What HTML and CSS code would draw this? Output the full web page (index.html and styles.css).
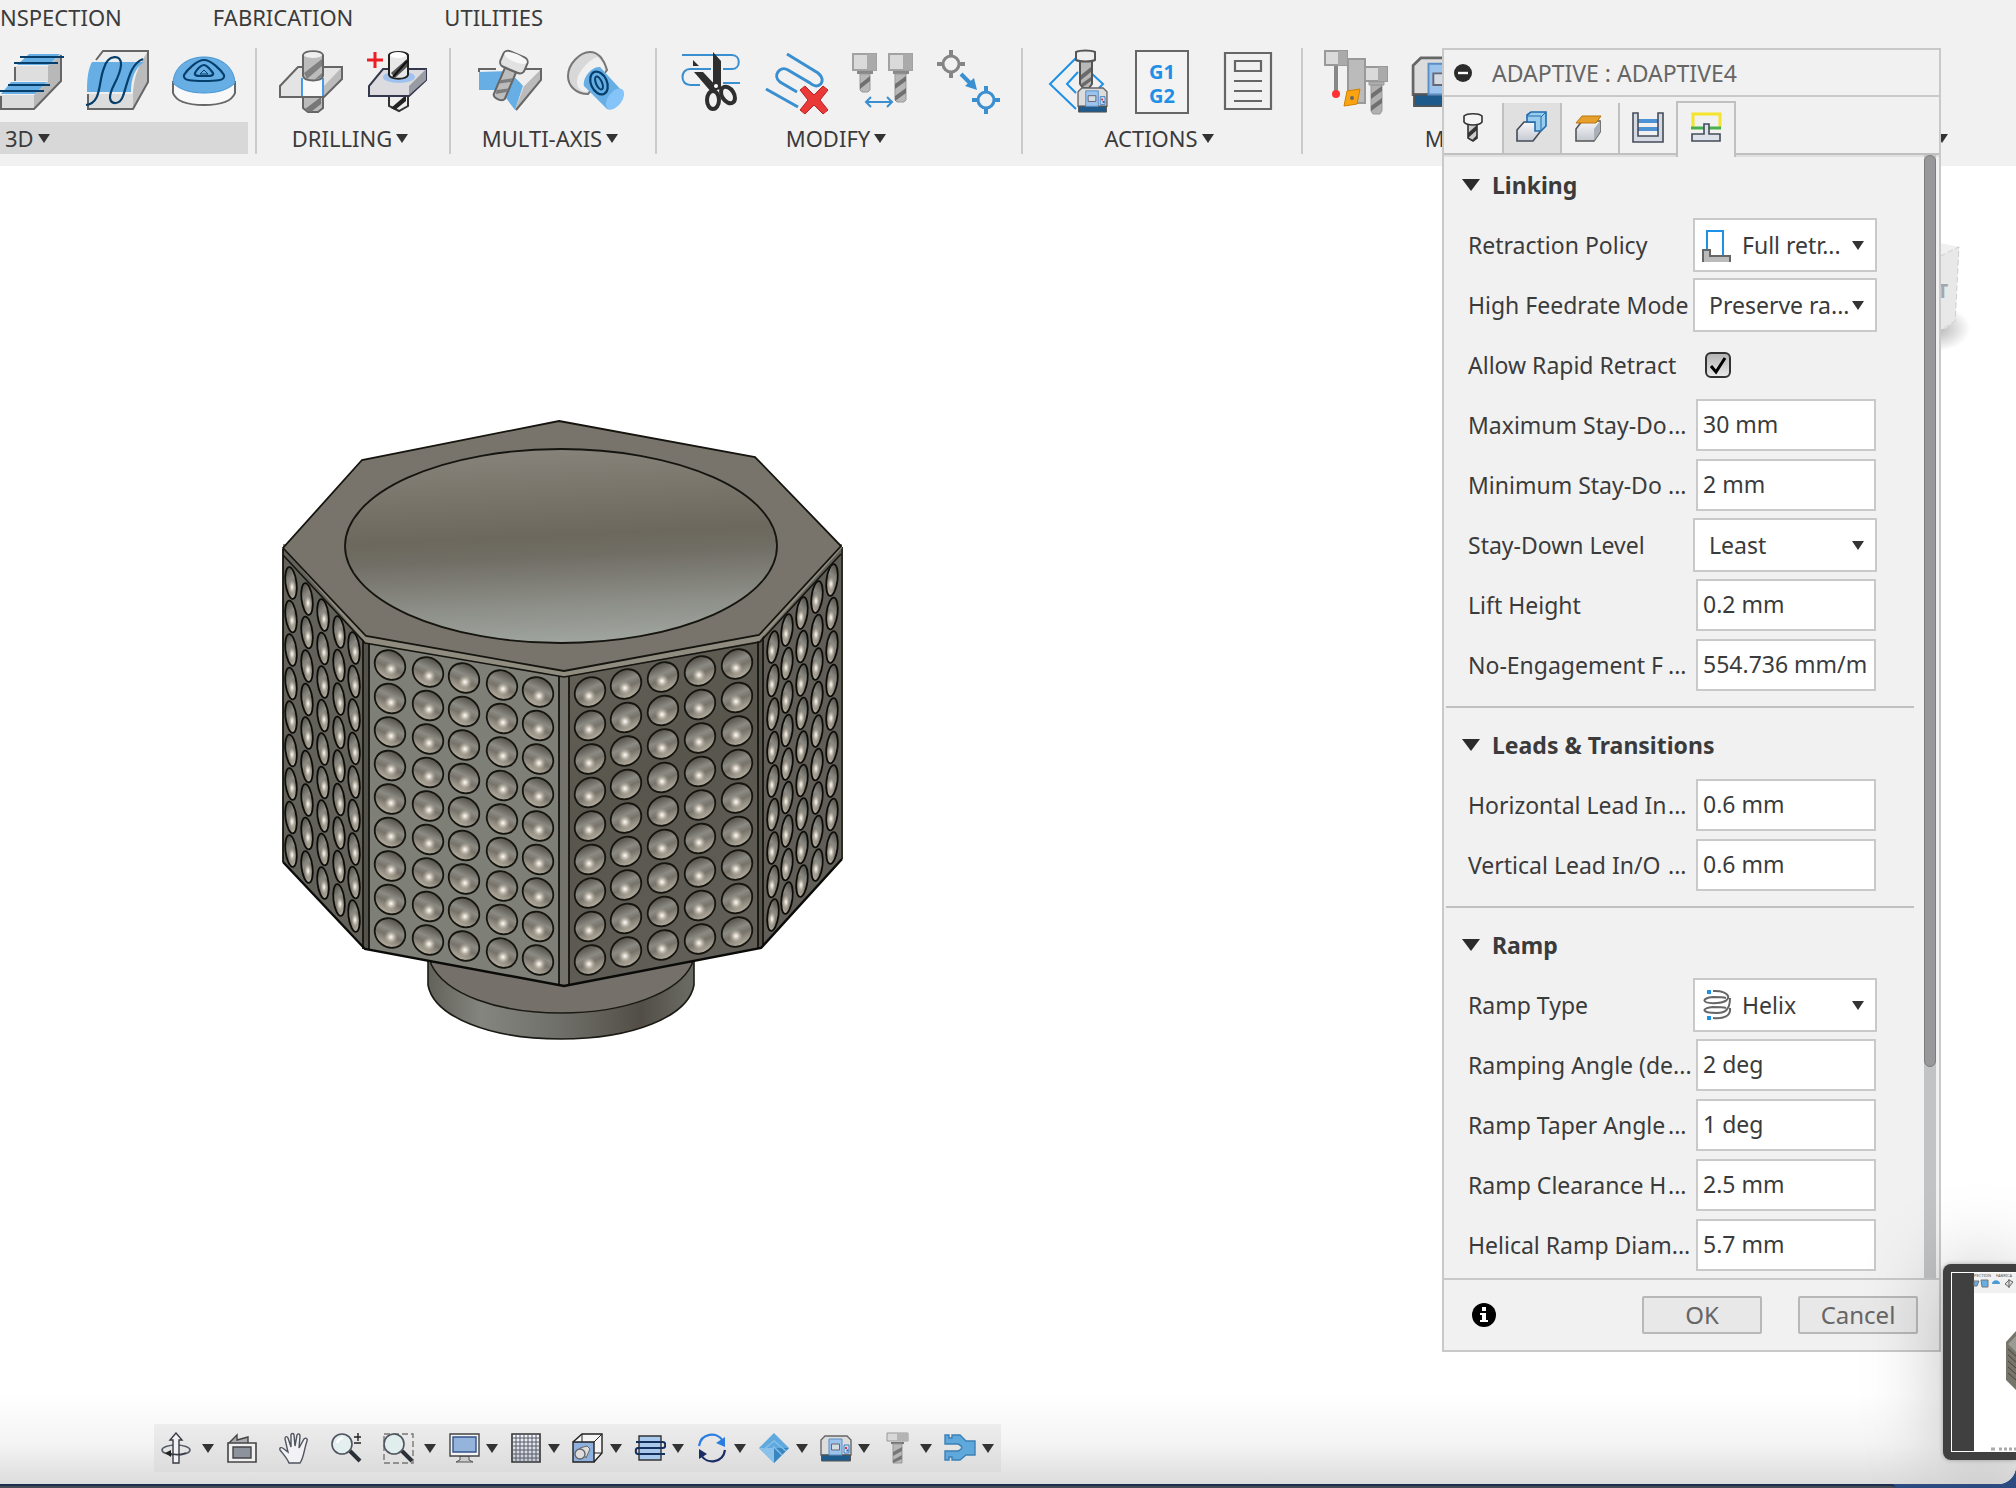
FILE: index.html
```html
<!DOCTYPE html>
<html lang="en">
<head>
    <meta charset="UTF-8">
    <meta name="viewport" content="width=device-width, initial-scale=1.0">
    <title>Adaptive : Adaptive4</title>
    <link rel="stylesheet" href="styles.css">
</head>
<body>

    <!-- shared shapes -->
    <svg class="defs" aria-hidden="true">
        <defs>
            <linearGradient id="plate" x1="0" x2="0" y1="0" y2="1">
                <stop offset="0" stop-color="#f8f8fa"/>
                <stop offset="1" stop-color="#c4c8d0"/>
            </linearGradient>
            <symbol id="machine" viewBox="0 0 32 28">
                <path d="M5 1h22l4 4v15H1V5z" fill="#dcdcdc" stroke="#666" stroke-width="1.4"/>
                <path d="M1.500 20h29v6h-29z" fill="#1f5a8c" stroke="#555"/>
                <path d="M9 4h13v16H9z" fill="#9cc3ec" stroke="#5a8ec4"/>
                <path d="M11.500 9h8v6h-8z" fill="#d5dbe2" stroke="#667"/>
                <path d="M24 10h5v8h-5z" fill="#cfe0f5" stroke="#3f7fc0"/>
                <path d="M25 12h2v2h-2z" fill="#e03040"/>
                <path d="M26.500 14.500h2v2h-2z" fill="#2a62c8"/>
            </symbol>
            <symbol id="caret" viewBox="0 0 12 9">
                <path d="M0 0h12L6 9z" fill="#333"/>
            </symbol>
        </defs>
    </svg>

    <div class="window">
        <header class="ribbon">
            <nav class="menu">
                <a href="#">NSPECTION</a>
                <a href="#">FABRICATION</a>
                <a href="#">UTILITIES</a>
            </nav>
            <div class="groups">
                <div class="group group-first">
                    <div class="icons">
                        <button aria-label="Pocket clearing"><svg viewBox="0 0 64 64">
                            <path d="M15 18h33v15H15z" fill="#dedede"/>
                            <path d="M48 18 61 6v27L34 61V47l14-14z" fill="#b8b8b8"/>
                            <path d="M0 47h34v14H0z" fill="#dcdcdc"/>
                            <path d="M15 19v14M61 7v26L34 61H1V48" fill="none" stroke="#666" stroke-width="2"/>
                            <path d="M29 6h31L49 17H17zM11 34h36L35 46H1z" fill="#66aee4"/>
                            <path d="M20 9h44M14 15h44M8 37h42M0 43h44" stroke="#063f6b" stroke-width="2.200"/>
                        </svg></button>
                        <button aria-label="Parallel"><svg viewBox="0 0 64 64">
                            <path d="M10 12 17 3h45v31L47 61H2V46l6-32z" fill="#eee"/>
                            <path d="M62 3v31L47 61V44c1-14 4-24 15-41z" fill="#bbb"/>
                            <path d="M2 46h45v15H2z" fill="#dcdcdc"/>
                            <path d="M10 12 17 3h45v31L47 61H2V46" fill="none" stroke="#666" stroke-width="2"/>
                            <path d="M6 14h52c-9 6-13 16-13 30H1C1 31 2 21 6 14z" fill="#66aee4"/>
                            <path d="M0 57c16-2 12-23 18-37 4-14 18-14 17-3-1 14-12 24-11 33 1 7 10 7 13-2 5-14 7-32 20-37" fill="none" stroke="#063f6b" stroke-width="2.200"/>
                        </svg></button>
                        <button aria-label="Morphed spiral"><svg viewBox="0 0 64 64">
                            <path d="M1 34v11c3 8 15 12 31 12s28-4 31-12V34z" fill="#f8f8f8" stroke="#666" stroke-width="2"/>
                            <path d="M1 35C2 18 16 9 32 9s30 9 31 26c-7 7-18 10-31 10S8 42 1 35z" fill="#66aee4" stroke="#4a96d2"/>
                            <path d="M32 12c7 0 17 10 20 15 2 6-10 6-20 6S10 33 12 27c3-5 13-15 20-15zM32 17c3 0 6 4 9 8 1 3-3 3-9 3s-10 0-9-3c2-4 6-8 9-8z" fill="none" stroke="#063f6b" stroke-width="2.200"/>
                            <path d="m32 22 4 4h-8z" fill="none" stroke="#063f6b"/>
                        </svg></button>
                    </div>
                    <button class="group-label active">3D<svg class="caret"><use href="#caret"/></svg></button>
                </div>
                <div class="group">
                    <div class="icons">
                        <button aria-label="Drill"><svg viewBox="0 0 64 64">
                            <path d="M25 48h20v12l-5 4H30l-5-4z" fill="#bbb" stroke="#666" stroke-width="2"/>
                            <path d="m27 61 16-12v7l-10 8z" fill="#777"/>
                            <path d="M20 19h44v12L46 49H2V38z" fill="#e4e4e4"/>
                            <path d="M46 38 64 19v12L46 49z" fill="#bbb"/>
                            <path d="M20 19h44v12L46 49H2V38z" fill="none" stroke="#666" stroke-width="2"/>
                            <path d="M24 30h21v18H24z" fill="#f8f8f8"/>
                            <path d="M24 30v18M45 30v18" stroke="#1e88e5" stroke-width="1.600"/>
                            <path d="M25 7v21c2 6 18 6 20 0V7c-2-5-18-5-20 0z" fill="#bcbcbc" stroke="#666" stroke-width="2"/>
                            <path d="M26 25 44 11v7L29 31zM36 32l8-7v4z" fill="#808080"/>
                            <ellipse cx="35" cy="7" rx="9" ry="3" fill="#eee"/>
                        </svg></button>
                        <button aria-label="Hole recognition"><svg viewBox="0 0 64 64">
                            <path d="M25 46h19v12l-9 5-10-5z" fill="#eee" stroke="#333" stroke-width="2"/>
                            <path d="m27 60 15-13v6L31 62z" fill="#222"/>
                            <path d="M19 21h43v11L45 48H5V38z" fill="#dcdce0" stroke="#33384c" stroke-width="2"/>
                            <path d="M45 38 62 21v11L45 47z" fill="#9a9ca4"/>
                            <ellipse cx="35" cy="29" rx="16" ry="6" fill="#9fc2ee"/>
                            <path d="M25 7v20c2 5 17 5 19 0V7c-2-4-17-4-19 0z" fill="#e8e8e8" stroke="#222" stroke-width="2"/>
                            <path d="m27 25 16-14v8L31 30z" fill="#555"/>
                            <path d="M29 29 43 13" stroke="#111" stroke-width="2"/>
                            <ellipse cx="34" cy="7" rx="8" ry="3" fill="#fff"/>
                            <path d="M11 4v16M3 12h16" stroke="#ee1c25" stroke-width="3"/>
                        </svg></button>
                    </div>
                    <button class="group-label">DRILLING<svg class="caret"><use href="#caret"/></svg></button>
                </div>
                <div class="group group-wide">
                    <div class="icons">
                        <button aria-label="Swarf"><svg viewBox="0 0 64 64">
                            <path d="M1 24 33 23l12 15-8 24-15-20H1z" fill="#66aee4"/>
                            <path d="M46 38 63 21v11L37 62z" fill="#bbb"/>
                            <path d="M46 38 63 21H46L33 26z" fill="#eee"/>
                            <path d="M1 24v-3h17M46 21h17v11L38 62" fill="none" stroke="#666" stroke-width="2"/>
                            <g transform="rotate(23 34 16)">
                                <path d="M29 22h12v29c-1 4-11 4-12 0z" fill="#bcbcbc" stroke="#666" stroke-width="2"/>
                                <path d="m30 35 10-6v4l-10 6zM30 46l10-6v4l-9 6z" fill="#7c7c7c"/>
                                <rect x="22" y="5" width="26" height="17" rx="5" fill="#e2e2e2" stroke="#666" stroke-width="2"/>
                                <ellipse cx="35" cy="9" rx="12" ry="4" fill="#f7f7f7"/>
                            </g>
                        </svg></button>
                        <button aria-label="Multi-axis contour"><svg viewBox="0 0 64 64">
                            <path d="M26 4c9 0 14 8 17 18L24 46C12 46 4 38 4 28 4 16 16 4 26 4z" fill="#d8d8d8" stroke="#777" stroke-width="2"/>
                            <path d="M33 9c5 4 8 8 8 14L23 44c-6 0-10-4-10-10 0-10 12-22 20-25z" fill="#f0f0f0"/>
                            <path d="m36 19 23 25c3 6-8 20-16 17L20 38c-2-8 8-20 16-19z" fill="#66aee4"/>
                            <ellipse cx="51" cy="51" rx="7" ry="12" transform="rotate(36 51 51)" fill="#84c4f8"/>
                            <ellipse cx="35" cy="35" rx="8" ry="12" transform="rotate(-24 35 35)" fill="none" stroke="#063f6b" stroke-width="2.200"/>
                            <ellipse cx="35" cy="35" rx="3" ry="7" transform="rotate(-24 35 35)" fill="none" stroke="#063f6b" stroke-width="2"/>
                        </svg></button>
                    </div>
                    <button class="group-label">MULTI-AXIS<svg class="caret"><use href="#caret"/></svg></button>
                </div>
                <div class="group">
                    <div class="icons">
                        <button aria-label="Trim toolpath"><svg viewBox="0 0 64 64">
                            <path d="M4 7h50c9 0 9 14 0 14H45M33 21H12c-10 0-10 16 0 16h10M45 35h17" fill="none" stroke="#3a8fd0" stroke-width="2"/>
                            <path d="m35 4 8 9v29l-8-2z" fill="#2e2e2e"/>
                            <path d="M16 24h9l16 17-7 4zM15 12l6 6h-6z" fill="#2e2e2e"/>
                            <ellipse cx="35" cy="52" rx="6" ry="9" fill="none" stroke="#2e2e2e" stroke-width="4"/>
                            <ellipse cx="50" cy="47" rx="6" ry="9" transform="rotate(-32 50 47)" fill="none" stroke="#2e2e2e" stroke-width="4"/>
                            <circle cx="38" cy="38" r="2" fill="#fff"/>
                        </svg></button>
                        <button aria-label="Delete passes"><svg viewBox="0 0 64 64">
                            <path d="m23 6 31 19c10 8 0 18-8 10L24 22c-8-5-16 6-8 12l17 10M2 41l32 18" fill="none" stroke="#3a8fd0" stroke-width="3"/>
                            <path d="m36 42 5-4 9 9 9-9 5 4-8 10 8 10-5 4-9-9-9 9-5-4 8-10z" fill="#e93a38" stroke="#b82222"/>
                        </svg></button>
                        <button aria-label="Replace tool"><svg viewBox="0 0 64 64">
                            <path d="M3 6h23v16H3z" fill="#dadada" stroke="#a2a2a2" stroke-width="2"/>
                            <path d="M17 6h9v16h-9z" fill="#aaa"/>
                            <path d="M7 23h16v3H7z" fill="#888"/>
                            <path d="M10 26h10v16l-2 2h-6l-2-2z" fill="#b8b8b8" stroke="#999"/>
                            <path d="m10 36 10-8v5l-10 8z" fill="#707070"/>
                            <path d="M39 6h23v16H39z" fill="#dadada" stroke="#a2a2a2" stroke-width="2"/>
                            <path d="M53 6h9v16h-9z" fill="#aaa"/>
                            <path d="M43 23h16v3H43z" fill="#888"/>
                            <path d="M45 26h11v26l-2 2h-7l-2-2z" fill="#b8b8b8" stroke="#999"/>
                            <path d="m45 36 11-8v5l-11 8zM45 48l11-8v5l-11 8z" fill="#707070"/>
                            <path d="M16 54h26m-21-5-5 5 5 5m16-10 5 5-5 5" fill="none" stroke="#3a8fd0" stroke-width="2"/>
                        </svg></button>
                        <button aria-label="Move entry positions"><svg viewBox="0 0 64 64">
                            <circle cx="15" cy="16" r="8" fill="none" stroke="#858585" stroke-width="3"/>
                            <path d="M15 2v7M15 23v7M1 16h7M22 16h7" stroke="#858585" stroke-width="4"/>
                            <path d="m25 26 9 9" stroke="#3a8fd0" stroke-width="4"/>
                            <path d="m41 42-12-4 9-8z" fill="#3a8fd0"/>
                            <circle cx="50" cy="52" r="8" fill="none" stroke="#3a8fd0" stroke-width="3"/>
                            <path d="M50 38v7M50 59v7M36 52h7M57 52h7" stroke="#3a8fd0" stroke-width="4"/>
                        </svg></button>
                    </div>
                    <button class="group-label">MODIFY<svg class="caret"><use href="#caret"/></svg></button>
                </div>
                <div class="group">
                    <div class="icons">
                        <button aria-label="Simulate"><svg viewBox="0 0 64 64">
                            <path d="M32 10 6 36l26 25M34 24 23 36l9 9M46 24l13 12-4 4" fill="none" stroke="#1e90e6" stroke-width="2"/>
                            <path d="M36 12h12v24l-3 4h-6l-3-4z" fill="#b8b8b8" stroke="#555" stroke-width="2"/>
                            <path d="m37 27 10-8v5l-10 8zM37 36l10-7v4l-8 6z" fill="#6a6a6a"/>
                            <path d="M32 4c4-2 15-2 19 0v8c-4 2-15 2-19 0z" fill="#eee" stroke="#555" stroke-width="2"/>
                            <use href="#machine" x="33" y="39" width="31" height="27"/>
                        </svg></button>
                        <button aria-label="Post process"><svg viewBox="0 0 64 64">
                            <path d="M6 3h52v62H6z" fill="#f3f3f3" stroke="#666" stroke-width="2"/>
                            <text x="32" y="31" text-anchor="middle" class="g-code">G1</text>
                            <text x="32" y="55" text-anchor="middle" class="g-code">G2</text>
                        </svg></button>
                        <button aria-label="Setup sheet"><svg viewBox="0 0 64 64">
                            <path d="M9 5h46v56H9zM19 13h26v10H19zM18 33h28M18 43h28M18 53h28" fill="none" stroke="#666" stroke-width="2.200"/>
                        </svg></button>
                    </div>
                    <button class="group-label">ACTIONS<svg class="caret"><use href="#caret"/></svg></button>
                </div>
                <div class="group group-manage">
                    <div class="icons">
                        <button aria-label="Tool library"><svg viewBox="0 0 64 64">
                            <path d="M24 11h17v44H24z" fill="#bbb" stroke="#999" stroke-width="2"/>
                            <path d="M1 3h22v14H1z" fill="#dadada" stroke="#999" stroke-width="2"/>
                            <path d="M14 3h9v14h-9z" fill="#aaa"/>
                            <path d="M12 18v26" stroke="#888" stroke-width="4"/>
                            <circle cx="12" cy="46" r="4" fill="#f33"/>
                            <path d="m23 43 13-2-3 15-13 2z" fill="#fca311" stroke="#d08000"/>
                            <circle cx="28" cy="50" r="2" fill="#666"/>
                            <path d="M41 19h22v14H41z" fill="#dadada" stroke="#999" stroke-width="2"/>
                            <path d="M54 19h9v14h-9z" fill="#aaa"/>
                            <path d="M45 34h15v3H45zM47 37h11v26l-2 3h-7l-2-3z" fill="#b0b0b0" stroke="#999"/>
                            <path d="m47 46 11-8v5l-11 8zM47 58l11-8v5l-11 8z" fill="#707070"/>
                        </svg></button>
                        <button aria-label="Machine library"><svg viewBox="0 0 64 64">
                            <use href="#machine" x="0" y="8" width="64" height="54"/>
                        </svg></button>
                    </div>
                    <button class="group-label">MANAGE<svg class="caret"><use href="#caret"/></svg></button>
                </div>
                <div class="group group-last">
                    <button class="group-label" aria-label="Select"><svg class="caret"><use href="#caret"/></svg></button>
                </div>
            </div>
        </header>

        <main class="canvas">
            <div class="stage">
                <svg class="model" viewBox="280 418 564 624" role="img" aria-label="Octagonal knob">
                    <defs>
                        <linearGradient id="bowl" x1=".4" x2=".5" y1="0" y2="1">
                            <stop offset="0" stop-color="#88837a"/>
                            <stop offset=".45" stop-color="#6c685d"/>
                            <stop offset=".56" stop-color="#716e65"/>
                            <stop offset=".8" stop-color="#8c8e87"/>
                            <stop offset="1" stop-color="#a0a59f"/>
                        </linearGradient>
                        <linearGradient id="stem">
                            <stop offset="0" stop-color="#62625b"/>
                            <stop offset=".2" stop-color="#84857e"/>
                            <stop offset=".5" stop-color="#6f6f69"/>
                            <stop offset=".8" stop-color="#524e46"/>
                            <stop offset="1" stop-color="#6c6c66"/>
                        </linearGradient>
                        <linearGradient id="faceRight" x1="0" y1="0" x2=".4" y2="1">
                            <stop offset="0" stop-color="#66635b"/>
                            <stop offset=".5" stop-color="#58554d"/>
                            <stop offset="1" stop-color="#605e56"/>
                        </linearGradient>
                        <linearGradient id="pit" x1=".3" y1="0" x2=".6" y2="1">
                            <stop offset="0" stop-color="#4c4a43"/>
                            <stop offset=".4" stop-color="#8b8a83"/>
                            <stop offset=".6" stop-color="#77736a"/>
                            <stop offset="1" stop-color="#b8b1a3"/>
                        </linearGradient>
                        <radialGradient id="glint">
                            <stop offset="0" stop-color="#fff"/>
                            <stop offset=".35" stop-color="#ded6ca" stop-opacity=".85"/>
                            <stop offset="1" stop-color="#b0a99b" stop-opacity="0"/>
                        </radialGradient>
                        <g id="dimple">
                            <ellipse rx="16" ry="14" transform="rotate(38)" fill="url(#pit)" stroke="#15140f" stroke-width="1.800"/>
                            <circle cx="1" cy="4" r="7" fill="url(#glint)"/>
                        </g>
                        <g id="slit">
                            <ellipse rx="5.500" ry="16" transform="rotate(-7)" fill="url(#pit)" stroke="#0d0c09" stroke-width="1.800"/>
                            <ellipse cx="1" cy="4" rx="4" ry="8" fill="url(#glint)"/>
                        </g>
                        <g id="dimples">
                            <use href="#dimple"/>
                            <use href="#dimple" y="33.500"/>
                            <use href="#dimple" y="67"/>
                            <use href="#dimple" y="100.500"/>
                            <use href="#dimple" y="134"/>
                            <use href="#dimple" y="167.500"/>
                            <use href="#dimple" y="201"/>
                            <use href="#dimple" y="234.500"/>
                            <use href="#dimple" y="268"/>
                        </g>
                        <g id="slits">
                            <use href="#slit"/>
                            <use href="#slit" y="33.500"/>
                            <use href="#slit" y="67"/>
                            <use href="#slit" y="100.500"/>
                            <use href="#slit" y="134"/>
                            <use href="#slit" y="167.500"/>
                            <use href="#slit" y="201"/>
                            <use href="#slit" y="234.500"/>
                            <use href="#slit" y="268"/>
                        </g>
                    </defs>

                    <!-- stem -->
                    <path d="M428 950v35c6 32 62 54 133 54s127-22 133-54v-35z" fill="url(#stem)" stroke="#1a1914" stroke-width="1.600"/>
                    <path d="M431 950v14c14 30 66 49 130 49s118-20 131-49v-14z" fill="#75706a" stroke="#1a1914" stroke-width="1.600"/>

                    <!-- side faces -->
                    <path d="M283 549 366 637V949L283 862z" fill="#62615a"/>
                    <path d="M366 637 564 672V986L366 949z" fill="#7e7f77"/>
                    <path d="M564 672 760 636V948L564 986z" fill="url(#faceRight)"/>
                    <path d="M760 636 841 547V860L760 948z" fill="#605e57"/>

                    <!-- left, front left -->
                    <use href="#slits" x="291" y="583"/>
                    <use href="#slits" x="307" y="599"/>
                    <use href="#slits" x="323" y="615"/>
                    <use href="#slits" x="339" y="632"/>
                    <use href="#slits" x="354" y="648"/>
                    <use href="#dimples" x="390" y="665"/>
                    <use href="#dimples" x="428" y="672"/>
                    <use href="#dimples" x="464" y="678"/>
                    <use href="#dimples" x="502" y="685"/>
                    <use href="#dimples" x="538" y="692"/>

                    <!-- front right, right: mirrored -->
                    <g transform="scale(-1 1)">
                        <use href="#dimples" x="-590" y="692"/>
                        <use href="#dimples" x="-626" y="684"/>
                        <use href="#dimples" x="-663" y="677"/>
                        <use href="#dimples" x="-700" y="671"/>
                        <use href="#dimples" x="-737" y="664"/>
                        <use href="#slits" x="-773" y="647"/>
                        <use href="#slits" x="-787" y="630"/>
                        <use href="#slits" x="-802" y="613"/>
                        <use href="#slits" x="-817" y="597"/>
                        <use href="#slits" x="-832" y="580"/>
                    </g>

                    <!-- vertical edges -->
                    <path d="M363 634h6v315h-6zM758 634h6v312l-6 3z" fill="#53524b"/>
                    <path d="M559 672h10v313l-5 1-5-1z" fill="#73736c"/>
                    <path d="M363 634v315M369 638v311M559 672v313M569 672v313M758 636v312M763 634v312M283 549v313M842 547v312" fill="none" stroke="#15140f" stroke-width="1.800"/>

                    <!-- top -->
                    <path d="m283 548 83 95 198 34 195-36 83-93v-4H283z" fill="#918c80"/>
                    <path d="m283 555 82 88 199 34 196-35 81-88" fill="none" stroke="#15140f" stroke-width="1.600"/>
                    <path d="m559 421 196 36 86 89-82 89-195 36-198-35-83-88 79-88z" fill="#78746b" stroke="#15140f" stroke-width="1.800"/>
                    <ellipse cx="561" cy="546" rx="216" ry="97" fill="url(#bowl)" stroke="#15140f" stroke-width="1.800"/>
                    <path d="m283 862 82 87 199 37 197-38 81-89" fill="none" stroke="#0a0a08" stroke-width="2.400"/>
                </svg>
            </div>

            <svg class="view-cube" viewBox="0 0 80 120" aria-hidden="true">
                <defs>
                    <radialGradient id="cubeShadow">
                        <stop offset="0" stop-color="#000" stop-opacity=".3"/>
                        <stop offset="1" stop-color="#000" stop-opacity="0"/>
                    </radialGradient>
                </defs>
                <ellipse cx="-4" cy="90" rx="36" ry="24" fill="url(#cubeShadow)"/>
                <path d="M0 0 20 4l-1 16-4 62-9 8H0z" fill="#f0f0f0"/>
                <path d="m0 14 20-10-4 78-16 10z" fill="#e8e8e8" stroke="#ccc" stroke-dasharray="6 3"/>
                <text x="-3" y="58" class="cube-text">T</text>
            </svg>

            <div class="navbar">
                <button class="nav-drop wide" aria-label="Orbit">
                    <svg viewBox="0 0 32 32">
                        <ellipse cx="16" cy="18" rx="14" ry="5" fill="none" stroke="#555b66" stroke-width="1.600"/>
                        <path d="M13 31V8h-3l6-7 6 7h-3v23z" fill="#f2f2f4" stroke="#3a3d46" stroke-width="1.400"/>
                        <path d="M8 21c6 2 13 2 18 0" fill="none" stroke="#3a3d46" stroke-width="1.600"/>
                        <path d="m5 21 6-3v7z" fill="#222"/>
                    </svg>
                    <svg class="caret"><use href="#caret"/></svg>
                </button>
                <button class="nav-plain" aria-label="Look at">
                    <svg viewBox="0 0 32 32">
                        <path d="m3 11 8-8v5l11-3v6" fill="#a8abb0" stroke="#444" stroke-width="1.400"/>
                        <path d="M2 11h28v19H2z" fill="#f0f0f0" stroke="#444" stroke-width="1.600"/>
                        <path d="M7 15h18v11H7z" fill="#8d929c" stroke="#444" stroke-width="1.400"/>
                    </svg>
                </button>
                <button class="nav-plain" aria-label="Pan">
                    <svg viewBox="0 0 32 32">
                        <path d="M11 31c-2-5-6-9-9-13-1-3 2-3 4-1l4 3L7 7c0-3 2-3 3-1l3 9V3c0-2 3-2 3 0l1 11 2-11c1-2 3-1 3 1l-1 12 5-9c2-2 4 0 3 2-3 8-3 17-7 22z" fill="#f2f2f4" stroke="#50545e" stroke-width="1.400"/>
                    </svg>
                </button>
                <button class="nav-plain" aria-label="Zoom">
                    <svg viewBox="0 0 32 32">
                        <circle cx="12" cy="12" r="10" fill="#e4f0f0" stroke="#50545e" stroke-width="1.600"/>
                        <path d="M7 11c1-3 3-5 6-5" fill="none" stroke="#fff" stroke-width="2.400"/>
                        <path d="m20 19 10 10" stroke="#2b2f36" stroke-width="4"/>
                        <path d="M28 1v8M24 5h7M24 11h7" stroke="#222" stroke-width="1.400"/>
                    </svg>
                </button>
                <button class="nav-drop wide" aria-label="Zoom window">
                    <svg viewBox="0 0 32 32">
                        <path d="M2 2h29v29H2z" fill="none" stroke="#777" stroke-width="1.400" stroke-dasharray="6 3"/>
                        <circle cx="12" cy="12" r="10" fill="#e0eeee" stroke="#50545e" stroke-width="1.600"/>
                        <path d="m20 19 10 10" stroke="#2b2f36" stroke-width="4"/>
                    </svg>
                    <svg class="caret"><use href="#caret"/></svg>
                </button>
                <button class="nav-drop" aria-label="Display settings">
                    <svg viewBox="0 0 32 32">
                        <path d="M12 24h9v4l4 2H8l4-2z" fill="#ccc" stroke="#555"/>
                        <path d="M2 2h29v22H2z" fill="#f4f4f4" stroke="#444" stroke-width="1.400"/>
                        <path d="M5 5h23v15H5z" fill="#94b4dc" stroke="#35538a" stroke-width="1.400"/>
                    </svg>
                    <svg class="caret"><use href="#caret"/></svg>
                </button>
                <button class="nav-drop" aria-label="Grid and snaps">
                    <svg viewBox="0 0 32 32">
                        <path d="M2 2h28v28H2z" fill="url(#plate)" stroke="#333" stroke-width="1.600"/>
                        <path d="M6 2v28M10 2v28M14 2v28M18 2v28M22 2v28M26 2v28M2 6h28M2 10h28M2 14h28M2 18h28M2 22h28M2 26h28" stroke="#555b6a"/>
                    </svg>
                    <svg class="caret"><use href="#caret"/></svg>
                </button>
                <button class="nav-drop" aria-label="Object visibility">
                    <svg viewBox="0 0 32 32">
                        <path d="M1 10 10 2h20v19l-8 9" fill="#f4f4f4" stroke="#222" stroke-width="1.400"/>
                        <path d="M10 2v8M22 10l8-8M22 21h8" fill="none" stroke="#222"/>
                        <path d="M1 10h21v20H1z" fill="#8eb2e0" stroke="#222" stroke-width="1.400"/>
                        <path d="m8 16 7-2 3 3-4 9z" fill="#ddd" stroke="#666"/>
                        <circle cx="8" cy="22" r="5" fill="#ddd" stroke="#666" stroke-width="1.400"/>
                    </svg>
                    <svg class="caret"><use href="#caret"/></svg>
                </button>
                <button class="nav-drop" aria-label="Toolpath visibility">
                    <svg viewBox="0 0 32 32">
                        <path d="M5 4h22v24H5z" fill="#a8c8ec" stroke="#333" stroke-width="1.400"/>
                        <path d="M2 10h27c3 0 3 6 0 6H4c-3 0-3 6 0 6h27" fill="none" stroke="#16305e" stroke-width="2"/>
                    </svg>
                    <svg class="caret"><use href="#caret"/></svg>
                </button>
                <button class="nav-drop" aria-label="Regenerate">
                    <svg viewBox="0 0 32 32">
                        <path d="M3 14C5 1 21-1 27 9" fill="none" stroke="#2b7de0" stroke-width="2.200"/>
                        <path d="M29 5v10l-9-4z" fill="#2b7de0"/>
                        <path d="M29 18C27 31 11 33 5 23" fill="none" stroke="#1a2c66" stroke-width="2.200"/>
                        <path d="M3 27V17l8 5z" fill="#1a2c66"/>
                    </svg>
                    <svg class="caret"><use href="#caret"/></svg>
                </button>
                <button class="nav-drop" aria-label="Stock">
                    <svg viewBox="0 0 32 32">
                        <path d="m16 1 15 15-15 15L1 16z" fill="#5fa9de"/>
                        <path d="m16 16 15 0-15 15z" fill="#3a86c0"/>
                        <path d="M1 16h15v15z" fill="#8cc2ea"/>
                        <path d="m4 19 12-10 12 10M8 23l8-8 8 8" fill="none" stroke="#86c0ea" stroke-width="1.400"/>
                    </svg>
                    <svg class="caret"><use href="#caret"/></svg>
                </button>
                <button class="nav-drop" aria-label="Machine">
                    <svg viewBox="0 0 32 32"><use href="#machine" y="3" width="32" height="28"/></svg>
                    <svg class="caret"><use href="#caret"/></svg>
                </button>
                <button class="nav-drop" aria-label="Tool">
                    <svg viewBox="0 0 32 32">
                        <path d="M5 1h21v8H5z" fill="#d8d8d8" stroke="#999"/>
                        <path d="M15 1h11v8H15z" fill="#b4b4b4"/>
                        <path d="M9 10h13v2H9z" fill="#777"/>
                        <path d="M11 12h9v19h-9z" fill="#b8b8b8" stroke="#999"/>
                        <path d="m11 20 9-5v4l-9 5zM11 28l9-5v4l-9 4z" fill="#777"/>
                    </svg>
                    <svg class="caret"><use href="#caret"/></svg>
                </button>
                <button class="nav-drop" aria-label="Fixture">
                    <svg viewBox="0 0 32 32">
                        <path d="M1 3h4v3h3V3h8l6 6h9v14h-9l-6 5H8v-3H5v3H1v-9h13c5-2 5-5 0-7H1z" fill="#5fa8dc" stroke="#3c80b4" stroke-width="1.400"/>
                    </svg>
                    <svg class="caret"><use href="#caret"/></svg>
                </button>
            </div>
        </main>

        <form class="panel">
            <div class="panel-title">
                <svg class="collapse" viewBox="0 0 18 18"><circle cx="9" cy="9" r="9" fill="#2b2b2b"/><path d="M4 9h10" stroke="#fff" stroke-width="2.400"/></svg>
                ADAPTIVE : ADAPTIVE4
            </div>
            <div class="tabs">
                <button type="button" class="tab tab-first" aria-label="Tool"><svg viewBox="0 0 32 32">
                    <path d="M11 13h9v14l-4 3-5-3z" fill="#ccc" stroke="#333" stroke-width="1.600"/>
                    <path d="m11 22 9-8v5l-9 8zM14 30l6-6v3z" fill="#333"/>
                    <path d="M7 5c3-3 15-3 18 0v6c-3 4-15 4-18 0z" fill="#f4f4f4" stroke="#333" stroke-width="1.600"/>
                </svg></button>
                <button type="button" class="tab tab-hover" aria-label="Geometry"><svg viewBox="0 0 32 32">
                    <path d="M1 19 8 11h16v10l-7 9H1z" fill="url(#plate)" stroke="#444c58" stroke-width="1.600"/>
                    <path d="M11 4 15 1h15v14l-5 5h-6v-9h-8z" fill="#9accec" stroke="#1f6cb0" stroke-width="1.600"/>
                    <path d="m25 6 5-5M25 6v14M11 5h14" fill="none" stroke="#1f6cb0"/>
                </svg></button>
                <button type="button" class="tab" aria-label="Heights"><svg viewBox="0 0 32 32">
                    <path d="m2 18 6-8h18v11l-6 9H2z" fill="url(#plate)" stroke="#555" stroke-width="1.600"/>
                    <path d="m20 18 6-8v11l-6 9z" fill="#aab0ba"/>
                    <path d="M8 5h19l-5 7H2z" fill="#e8a02c" stroke="#b87410"/>
                </svg></button>
                <button type="button" class="tab" aria-label="Passes"><svg viewBox="0 0 32 32">
                    <path d="M6 8h20v4H6zM6 16h20v4H6z" fill="#4f92d4"/>
                    <path d="M1 2h5v23h20V2h5v29H1z" fill="#d6dae2" stroke="#444c58" stroke-width="1.600"/>
                </svg></button>
                <button type="button" class="tab tab-selected" aria-label="Linking"><svg viewBox="0 0 32 32">
                    <path d="M3 16V3h27v13" fill="none" stroke="#f5e42c" stroke-width="3"/>
                    <path d="M1 17h30" stroke="#49b04c" stroke-width="3"/>
                    <path d="M14 13h5v10h11v7H2v-7h12z" fill="#dde2ea" stroke="#444c58" stroke-width="1.600"/>
                </svg></button>
            </div>

            <div class="panel-body">
                <div class="sections">
                    <section class="section">
                        <h2>Linking</h2>
                        <div class="row">
                            <label for="policy">Retraction Policy</label>
                            <div class="drop has-icon">
                                <select id="policy"><option>Full retr...</option></select>
                                <svg class="drop-icon" viewBox="0 0 32 34">
                                    <path d="M6 22V3h16v26" fill="none" stroke="#1e90e6" stroke-width="2"/>
                                    <path d="M2 34V22h7v6h20v6z" fill="#bbb"/>
                                    <path d="M2 34V22h7v6h20v6" fill="none" stroke="#666" stroke-width="2"/>
                                </svg>
                                <svg class="caret"><use href="#caret"/></svg>
                            </div>
                        </div>
                        <div class="row">
                            <label for="feedmode">High Feedrate Mode</label>
                            <div class="drop">
                                <select id="feedmode"><option>Preserve ra...</option></select>
                                <svg class="caret"><use href="#caret"/></svg>
                            </div>
                        </div>
                        <div class="row">
                            <label for="rapid">Allow Rapid Retract</label>
                            <input type="checkbox" id="rapid" checked>
                        </div>
                        <div class="row">
                            <label for="maxstay"><span class="cut">Maximum Stay-Do</span>...</label>
                            <input type="text" id="maxstay" value="30 mm">
                        </div>
                        <div class="row">
                            <label for="minstay"><span class="cut">Minimum Stay-Do</span>...</label>
                            <input type="text" id="minstay" value="2 mm">
                        </div>
                        <div class="row">
                            <label for="level">Stay-Down Level</label>
                            <div class="drop">
                                <select id="level"><option>Least</option></select>
                                <svg class="caret"><use href="#caret"/></svg>
                            </div>
                        </div>
                        <div class="row">
                            <label for="lift">Lift Height</label>
                            <input type="text" id="lift" value="0.2 mm">
                        </div>
                        <div class="row">
                            <label for="noeng"><span class="cut">No-Engagement F</span>...</label>
                            <input type="text" id="noeng" value="554.736 mm/m">
                        </div>
                    </section>

                    <section class="section">
                        <h2>Leads &amp; Transitions</h2>
                        <div class="row">
                            <label for="hlead"><span class="cut">Horizontal Lead In</span>...</label>
                            <input type="text" id="hlead" value="0.6 mm">
                        </div>
                        <div class="row">
                            <label for="vlead"><span class="cut">Vertical Lead In/O</span>...</label>
                            <input type="text" id="vlead" value="0.6 mm">
                        </div>
                    </section>

                    <section class="section">
                        <h2>Ramp</h2>
                        <div class="row">
                            <label for="ramptype">Ramp Type</label>
                            <div class="drop has-icon">
                                <select id="ramptype"><option>Helix</option></select>
                                <svg class="drop-icon" viewBox="0 0 32 34">
                                    <path d="M6 2h4v4H6zM6 28h4v4H6z" fill="#1e90e6"/>
                                    <path d="M12 3c18-1 21 11 4 12-16 1-16-5-4-6 6 0 10 0 13 1M29 10c0 12-5 15-13 15-16 0-16-5-4-6 6 0 10 0 13 1M29 20c1 8-6 11-17 10" fill="none" stroke="#666" stroke-width="2"/>
                                </svg>
                                <svg class="caret"><use href="#caret"/></svg>
                            </div>
                        </div>
                        <div class="row">
                            <label for="angle"><span class="cut">Ramping Angle (de</span>...</label>
                            <input type="text" id="angle" value="2 deg">
                        </div>
                        <div class="row">
                            <label for="taper"><span class="cut">Ramp Taper Angle</span>...</label>
                            <input type="text" id="taper" value="1 deg">
                        </div>
                        <div class="row">
                            <label for="clearance"><span class="cut">Ramp Clearance H</span>...</label>
                            <input type="text" id="clearance" value="2.5 mm">
                        </div>
                        <div class="row">
                            <label for="diameter"><span class="cut">Helical Ramp Diam</span>...</label>
                            <input type="text" id="diameter" value="5.7 mm">
                        </div>
                    </section>
                </div>
                <div class="scrollbar"><div class="thumb"></div></div>
            </div>

            <div class="panel-footer">
                <svg class="info" viewBox="0 0 24 24"><circle cx="12" cy="12" r="12" fill="#000"/><path d="M10 4h4v4h-4zM8 10h6v7h2v2H8v-2h2v-5H8z" fill="#fff"/></svg>
                <button type="button" class="btn">OK</button>
                <button type="button" class="btn">Cancel</button>
            </div>
        </form>

        <div class="thumbnail">
            <svg viewBox="0 0 65 180" aria-hidden="true">
                <path d="M0 0h66v180H0z" fill="#fff"/>
                <path d="M1 1h22v178H1z" fill="#404040"/>
                <path d="M23 1h43v20H23z" fill="#f1f1f1"/>
                <text x="23" y="5" class="mini">PECTION</text>
                <text x="45" y="5" class="mini">FABRICA</text>
                <path d="M23 9h5l-2 5h-3zM30 8h7v7h-6z" fill="#66aee4" stroke="#777"/>
                <path d="M41 12c0-5 8-5 8 0z" fill="#4a9ad8"/>
                <path d="m54 12 4-4 4 2-4 5zM58 7v9" fill="#ddd" stroke="#666"/>
                <path d="m66 58-11 12v38l11 11z" fill="#77746b"/>
                <path d="m66 63-9 9 9 9z" fill="#999b94"/>
                <path d="m57 77 9 8M57 83l9 8M57 89l9 8M57 95l9 8M57 101l9 8" stroke="#45433d"/>
                <path d="M40 177h4M48 177h3M53 177h3M58 177h3M63 177h3" stroke="#aaa" stroke-width="3"/>
            </svg>
        </div>
    </div>
    <div class="dock-edge"></div>

</body>
</html>
```
FILE: styles.css
```css
* {
    box-sizing: border-box;
}
body {
    margin: 0;
    background: #2c4b80;
    font-family: "Noto Sans", "Open Sans", sans-serif;
    font-size: 22px;
    line-height: 32px;
    color: #3b3b3b;
    overflow: hidden;
}
button, input, select {
    font: inherit;
    color: inherit;
}
button {
    border: 0;
    padding: 0;
    background: none;
}
svg {
    display: block;
}
.defs {
    position: absolute;
    width: 0;
    height: 0;
}
.window {
    position: relative;
    display: flex;
    flex-direction: column;
    height: calc(100vh - 4px);
    background: #fff;
    border-radius: 0 0 18px 0;
    overflow: hidden;
}
.dock-edge {
    height: 4px;
    width: 94%;
    background: #474b56;
    border-top: 2px solid #1d2d4c;
    border-radius: 0 8px 0 0;
}
.caret {
    width: 12px;
    height: 9px;
    flex: none;
}

/* ribbon */
.ribbon {
    background: #f1f1f1;
    height: 166px;
    flex: none;
    overflow: hidden;
}
.menu {
    display: flex;
    gap: 91px;
    height: 48px;
    padding-top: 1px;
}
.menu a {
    color: inherit;
    text-decoration: none;
}
.groups {
    display: flex;
}
.group {
    display: flex;
    flex-direction: column;
    align-items: center;
    gap: 10px;
    height: 106px;
    padding: 0 21px;
    border-left: 2px solid #cbcbcb;
    flex: none;
}
.group-first {
    align-items: stretch;
    border-left: 0;
    padding: 0 7px 0 0;
    width: 255px;
}
.group-wide {
    padding: 0 27px;
}
.group-manage {
    width: 360px;
}
.group-manage .icons {
    align-self: flex-start;
}
.group-last {
    flex: 1;
    align-items: flex-end;
    justify-content: flex-end;
    padding-right: 62px;
    border: 0;
}
.icons {
    display: flex;
    gap: 22px;
}
.icons svg {
    width: 64px;
    height: 64px;
    overflow: visible;
}
.group-label {
    display: flex;
    align-items: center;
    gap: 4px;
    height: 32px;
    padding-right: 6px;
    flex: none;
}
.group-label.active {
    background: #d8d8d8;
    padding-left: 5px;
}
.g-code {
    font: bold 20px "Noto Sans", sans-serif;
    fill: #1e90e6;
}

/* canvas */
.canvas {
    position: relative;
    flex: 1;
    display: flex;
    flex-direction: column;
    background: linear-gradient(to top, #dcdcdc, #f4f4f4 40px, #fff 90px);
}
.stage {
    flex: 1;
    padding: 252px 0 0 280px;
}
.model {
    width: 564px;
    height: 624px;
}
.view-cube {
    position: absolute;
    top: 74px;
    right: 0;
    width: 76px;
    height: 120px;
    overflow: visible;
}
.cube-text {
    font: bold 20px "Noto Sans", sans-serif;
    fill: #a4a8ac;
}
.navbar {
    display: flex;
    gap: 12px;
    align-items: center;
    align-self: flex-start;
    height: 48px;
    margin: 0 0 12px 154px;
    padding: 0 7px 0 6px;
    background: linear-gradient(#ededed, #dcdcdc);
}
.navbar svg:first-child {
    width: 32px;
    height: 32px;
}
.nav-plain {
    width: 40px;
}
.nav-drop {
    display: flex;
    align-items: center;
    justify-content: space-between;
    width: 50px;
}
.nav-drop.wide {
    width: 54px;
}

/* dialog */
.panel {
    position: absolute;
    top: 48px;
    right: 75px;
    width: 499px;
    background: #f1f1f1;
    border: 2px solid #c9c9c9;
    font-size: 23px;
}
.panel-title {
    display: flex;
    align-items: center;
    gap: 20px;
    height: 47px;
    padding-left: 10px;
    color: #666;
    border-bottom: 2px solid #c9c9c9;
}
.collapse {
    width: 18px;
    height: 18px;
}
.tabs {
    display: flex;
    align-items: flex-end;
    height: 58px;
    border-bottom: 2px solid #c0c0c0;
    box-shadow: 0 2px 0 #e0e0e0;
}
.tab {
    width: 58px;
    height: 50px;
    padding-bottom: 2px;
    border-right: 2px solid #c0c0c0;
    display: flex;
    align-items: center;
    justify-content: center;
}
.tab svg {
    width: 32px;
    height: 32px;
}
.tab-first {
    width: 60px;
}
.tab-hover {
    background: #e0e0e0;
}
.tab:nth-child(4) {
    width: 56px;
    border-right: 0;
}
.tab-selected {
    height: 56px;
    width: 60px;
    margin-bottom: -4px;
    padding-bottom: 6px;
    background: #f1f1f1;
    border: 2px solid #c0c0c0;
    border-bottom: 0;
}
.panel-body {
    display: flex;
    gap: 10px;
    padding-right: 3px;
}
.sections {
    flex: 1;
    padding-left: 2px;
}
.section {
    padding: 0 37px 11px 22px;
    border-bottom: 2px solid #c0c0c0;
    margin-bottom: 7px;
}
.section:last-child {
    padding-bottom: 3px;
    margin-bottom: 0;
    border-bottom: 0;
}
.section h2 {
    display: flex;
    align-items: center;
    gap: 12px;
    height: 60px;
    margin: 0 0 0 -6px;
    font-size: 23px;
}
.section h2::before {
    content: "";
    border: 9px solid transparent;
    border-top: 12px solid #2b2b2b;
    border-bottom: 0;
}
.row {
    display: grid;
    grid-template-columns: 1fr 184px;
    align-items: center;
    height: 60px;
}
.row label {
    display: flex;
    white-space: nowrap;
}
.cut {
    min-width: 200px;
}
.row input[type="text"] {
    justify-self: end;
    width: 180px;
    height: 52px;
    margin: 0 1px 0 0;
    padding: 0 0 2px 5px;
    border: 2px solid #c9c9c9;
    background: #fff;
}
.row input[type="checkbox"] {
    appearance: none;
    width: 26px;
    height: 26px;
    margin: 0 0 0 12px;
    border: 2px solid #333;
    border-radius: 6px;
    background: url("data:image/svg+xml,%3Csvg xmlns='http://www.w3.org/2000/svg' viewBox='0 0 22 22'%3E%3Cpath d='M4 12l5 6L18 4' fill='none' stroke='%23000' stroke-width='3'/%3E%3C/svg%3E"), linear-gradient(#b4b4b4, #e8e8e8);
}
.drop {
    display: grid;
    align-items: center;
    height: 54px;
    border: 2px solid #c9c9c9;
    background: #fff;
}
.drop > * {
    grid-area: 1 / 1;
}
.drop select {
    appearance: none;
    width: 100%;
    height: 50px;
    padding: 0 0 0 14px;
    border: 0;
    background: none;
}
.drop.has-icon select {
    padding-left: 47px;
}
.drop-icon {
    width: 32px;
    height: 34px;
    margin-left: 6px;
    pointer-events: none;
}
.drop .caret {
    justify-self: end;
    margin-right: 11px;
    pointer-events: none;
}
.scrollbar {
    width: 12px;
    background: #c2c3c4;
}
.thumb {
    height: 912px;
    border: 1px solid #7c7c7c;
    border-radius: 6px;
    background: #98989a;
}
.panel-footer {
    display: flex;
    align-items: center;
    gap: 36px;
    height: 72px;
    padding: 0 21px 0 28px;
    border-top: 2px solid #c9c9c9;
}
.info {
    width: 24px;
    height: 24px;
    margin-right: auto;
}
.btn {
    width: 120px;
    height: 38px;
    border: 2px solid #b8b8b8;
    border-radius: 2px;
    background: #e8e8e8;
    color: #666;
    font-size: 24px;
    line-height: 34px;
}

.thumbnail {
    position: absolute;
    right: 0;
    bottom: 24px;
    width: 73px;
    padding: 8px 0 8px 8px;
    background: #404040;
    border-radius: 8px 0 0 8px;
    box-shadow: 0 0 4px rgba(0, 0, 0, 0.3), 0 0 80px rgba(0, 0, 0, 0.25);
}
.thumbnail svg {
    width: 100%;
}
.mini {
    font: 4px "Noto Sans", sans-serif;
    fill: #555;
}
```
